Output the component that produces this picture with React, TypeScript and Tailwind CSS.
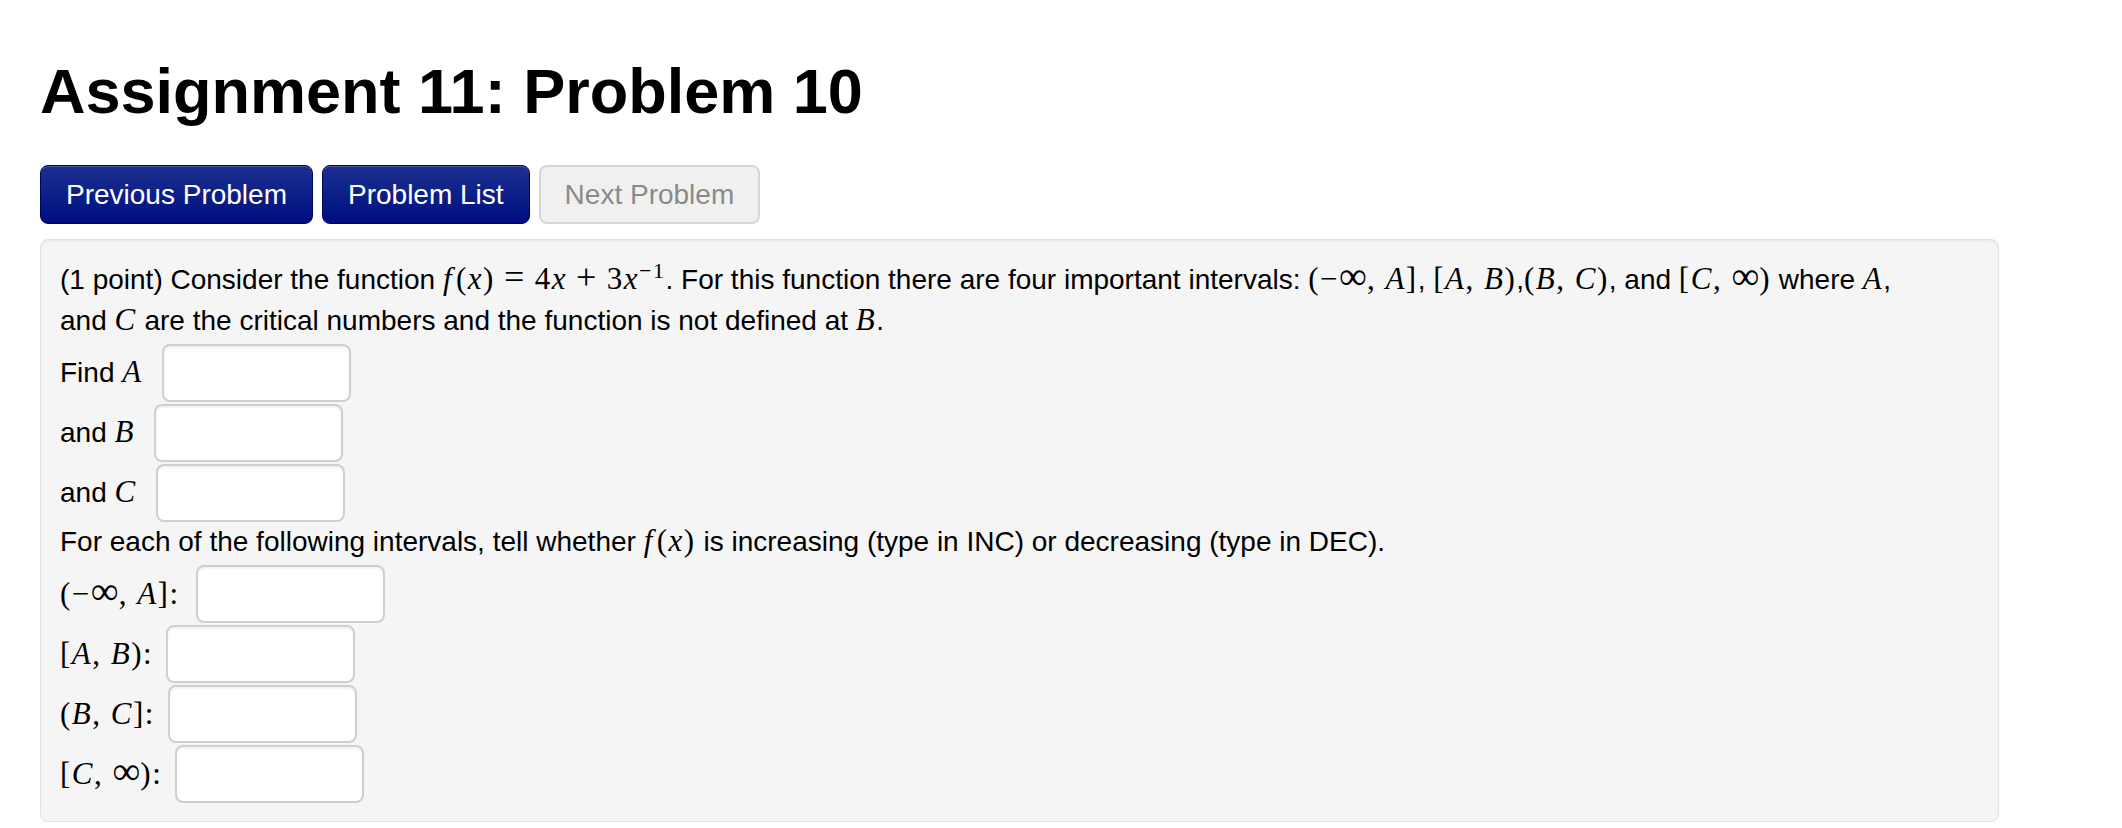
import React from "react";

const sans = "font-['Liberation_Sans','Arial',sans-serif]";
const serif = "font-['Liberation_Serif','DejaVu_Serif',serif]";

function M({ children }: { children: React.ReactNode }) {
    return <span className={`${serif} text-[31px] leading-[40px] tracking-[1.5px]`}>{children}</span>;
}

function V({ children }: { children: React.ReactNode }) {
    return <span className="italic">{children}</span>;
}

function Inf() {
    return <span className="text-[39px] leading-[0px] tracking-normal">∞</span>;
}

function Op({ children }: { children: React.ReactNode }) {
    return <span className="mx-[9px] text-[36px] leading-[0px]">{children}</span>;
}

function AnswerBox() {
    return (
        <input
            type="text"
            className="h-[58px] w-[189px] rounded-[8px] border-2 border-[#cfcfcf] bg-white px-3 shadow-[inset_0_2px_2px_rgba(0,0,0,0.06)] outline-none"
        />
    );
}

function Row({ children, gap }: { children: React.ReactNode; gap: string }) {
    return (
        <div className={`flex h-[60px] items-center pt-[3px] ${gap}`}>
            {children}
            <AnswerBox />
        </div>
    );
}

function NavButton({ label, primary }: { label: string; primary?: boolean }) {
    return (
        <button
            className={
                primary
                    ? "h-[59px] rounded-[8px] border border-[#000560] bg-gradient-to-b from-[#1d2f90] to-[#000a80] px-[25px] text-[28px] leading-[40px] text-white shadow-[inset_0_1px_0_rgba(255,255,255,0.2)]"
                    : "h-[59px] rounded-[8px] border-2 border-[#d6d6d6] bg-[#f0f0f0] px-[24px] text-[28px] leading-[40px] text-[#8a8a8a]"
            }
        >
            {label}
        </button>
    );
}

export default function App() {
    return (
        <div className={`${sans} min-h-[828px] bg-white px-[40px] pt-[57px] text-black`}>
            <h1 className="text-[63px] font-bold leading-[69px]">Assignment 11: Problem 10</h1>

            <div className="mt-[39px] flex gap-[9px]">
                <NavButton label="Previous Problem" primary />
                <NavButton label="Problem List" primary />
                <NavButton label="Next Problem" />
            </div>

            <div className="mt-[15px] w-[1959px] rounded-[8px] border border-[#e2e2e2] bg-[#f5f5f5] px-[19px] pt-[19px] pb-[19px] text-[28px] leading-[40px] shadow-[inset_0_2px_2px_rgba(0,0,0,0.05)]">
                <div>
                    (1 point) Consider the function{" "}
                    <M>
                        <V>f</V>
                        <span className="ml-[3px]">(</span>
                        <V>x</V>)<Op>=</Op>4<V>x</V>
                        <Op>+</Op>3<V>x</V>
                        <sup className="text-[22px]">−1</sup>
                    </M>
                    . For this function there are four important intervals:{" "}
                    <M>
                        (−<Inf />, <V>A</V>]
                    </M>
                    ,{" "}
                    <M>
                        [<V>A</V>, <V>B</V>)
                    </M>
                    ,
                    <M>
                        (<V>B</V>, <V>C</V>)
                    </M>
                    , and{" "}
                    <M>
                        [<V>C</V>, <Inf />)
                    </M>{" "}
                    where{" "}
                    <M>
                        <V>A</V>
                    </M>
                    ,
                </div>
                <div>
                    and{" "}
                    <M>
                        <V>C</V>
                    </M>{" "}
                    are the critical numbers and the function is not defined at{" "}
                    <M>
                        <V>B</V>
                    </M>
                    .
                </div>

                <Row gap="gap-[19px]">
                    <span>
                        Find{" "}
                        <M>
                            <V>A</V>
                        </M>
                    </span>
                </Row>
                <Row gap="gap-[19px]">
                    <span>
                        and{" "}
                        <M>
                            <V>B</V>
                        </M>
                    </span>
                </Row>
                <Row gap="gap-[19px]">
                    <span>
                        and{" "}
                        <M>
                            <V>C</V>
                        </M>
                    </span>
                </Row>

                <div>
                    For each of the following intervals, tell whether{" "}
                    <M>
                        <V>f</V>
                        <span className="ml-[3px]">(</span>
                        <V>x</V>)
                    </M>{" "}
                    is increasing (type in INC) or decreasing (type in DEC).
                </div>

                <Row gap="gap-[16px]">
                    <M>
                        (−<Inf />, <V>A</V>]:
                    </M>
                </Row>
                <Row gap="gap-[13px]">
                    <M>
                        [<V>A</V>, <V>B</V>):
                    </M>
                </Row>
                <Row gap="gap-[13px]">
                    <M>
                        (<V>B</V>, <V>C</V>]:
                    </M>
                </Row>
                <Row gap="gap-[13px]">
                    <M>
                        [<V>C</V>, <Inf />):
                    </M>
                </Row>
            </div>
        </div>
    );
}
